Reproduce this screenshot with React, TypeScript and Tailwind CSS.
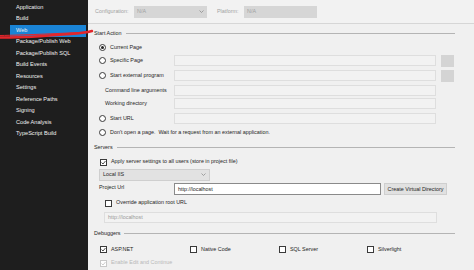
import React from "react";

const NAV = [
  "Application",
  "Build",
  "Web",
  "Package/Publish Web",
  "Package/Publish SQL",
  "Build Events",
  "Resources",
  "Settings",
  "Reference Paths",
  "Signing",
  "Code Analysis",
  "TypeScript Build",
];

function Radio({ on }: { on?: boolean }) {
  return (
    <span className="flex h-[7px] w-[7px] shrink-0 items-center justify-center rounded-full border border-[#3a3a3a] bg-white">
      {on && <span className="h-[3px] w-[3px] rounded-full bg-[#222]" />}
    </span>
  );
}

function Check({ on, dim }: { on?: boolean; dim?: boolean }) {
  return (
    <span
      className={`flex h-[7px] w-[7px] shrink-0 items-center justify-center border bg-white ${
        dim ? "border-[#c8c8c8]" : "border-[#3a3a3a]"
      }`}
    >
      {on && (
        <svg width="5" height="5" viewBox="0 0 10 10">
          <path
            d="M1 5 L4 8 L9 2"
            fill="none"
            stroke={dim ? "#c0c0c0" : "#222"}
            strokeWidth="1.6"
          />
        </svg>
      )}
    </span>
  );
}

function Field({ w, white, text }: { w: string; white?: boolean; text?: string }) {
  return (
    <div
      className={`flex h-[11px] items-center px-[3px] ${w} ${
        white ? "border border-[#8a8a8a] bg-white text-[#1e1e1e]" : "border border-[#dedede] bg-[#f2f2f2] text-[#9a9a9a]"
      }`}
    >
      {text}
    </div>
  );
}

function Header({ title }: { title: string }) {
  return (
    <div className="mr-[19px] flex items-center gap-[4px] pl-[6px]">
      <span className="text-[#1e1e1e]">{title}</span>
      <div className="h-px flex-1 bg-[#b4b4b4]" />
    </div>
  );
}

function Chevron() {
  return (
    <svg width="5" height="3" viewBox="0 0 10 6">
      <path d="M1 1 L5 5 L9 1" fill="none" stroke="#888" strokeWidth="1.5" />
    </svg>
  );
}

export default function App() {
  return (
    <div
      className="relative flex h-[270px] w-[474px] overflow-hidden text-[5.4px] leading-none"
      style={{ fontFamily: '"Liberation Sans", Arial, sans-serif' }}
    >
      <aside className="flex w-[88px] shrink-0 flex-col bg-[#1e1e1e] pt-[2px] text-[5.6px] text-[#f1f1f1]">
        {NAV.map((n) => (
          <div
            key={n}
            className={`ml-[10px] mr-[2px] flex h-[11.5px] items-center pl-[6px] ${
              n === "Web" ? "bg-[#1a84d6]" : ""
            }`}
          >
            {n}
          </div>
        ))}
      </aside>

      <main className="flex flex-1 flex-col bg-[#f0f0f0]">
        <div className="flex h-[24px] shrink-0 items-center border-b border-[#d6d6d6] bg-[#f2f2f2] pl-[7px] text-[#a2a2a2]">
          <span className="w-[39px]">Configuration:</span>
          <div className="flex h-[12px] w-[73px] items-center justify-between bg-[#d6d6d6] px-[3px]">
            <span>N/A</span>
            <Chevron />
          </div>
          <span className="ml-[10px] w-[27px]">Platform:</span>
          <div className="flex h-[12px] w-[73px] items-center bg-[#d6d6d6] px-[3px]">
            <span>N/A</span>
          </div>
        </div>

        <div className="flex h-[19px] items-center">
          <div className="flex-1">
            <Header title="Start Action" />
          </div>
        </div>

        <div className="flex h-[11px] items-center gap-[4px] pl-[11px] text-[#1e1e1e]">
          <Radio on />
          <span>Current Page</span>
        </div>

        <div className="flex h-[15px] items-center pl-[11px] text-[#1e1e1e]">
          <div className="flex w-[75px] items-center gap-[4px]">
            <Radio />
            <span>Specific Page</span>
          </div>
          <Field w="w-[262px]" />
          <div className="ml-[5px] h-[12px] w-[13px] bg-[#d4d4d4]" />
        </div>

        <div className="flex h-[16px] items-center pl-[11px] text-[#1e1e1e]">
          <div className="flex w-[75px] items-center gap-[4px]">
            <Radio />
            <span>Start external program</span>
          </div>
          <Field w="w-[262px]" />
          <div className="ml-[5px] h-[12px] w-[13px] bg-[#d4d4d4]" />
        </div>

        <div className="flex h-[14px] items-center pl-[17px] text-[#1e1e1e]">
          <span className="w-[69px]">Command line arguments</span>
          <Field w="w-[262px]" />
        </div>

        <div className="flex h-[13px] items-center pl-[17px] text-[#1e1e1e]">
          <span className="w-[69px]">Working directory</span>
          <Field w="w-[262px]" />
        </div>

        <div className="flex h-[17px] items-center pl-[11px] text-[#1e1e1e]">
          <div className="flex w-[75px] items-center gap-[4px]">
            <Radio />
            <span>Start URL</span>
          </div>
          <Field w="w-[262px]" />
        </div>

        <div className="flex h-[12px] items-center gap-[4px] pl-[11px] text-[#1e1e1e]">
          <Radio />
          <span>Don&apos;t open a page.&nbsp; Wait for a request from an external application.</span>
        </div>

        <div className="flex h-[19px] items-center">
          <div className="flex-1">
            <Header title="Servers" />
          </div>
        </div>

        <div className="flex h-[11px] items-center gap-[4px] pl-[12px] text-[#1e1e1e]">
          <Check on />
          <span>Apply server settings to all users (store in project file)</span>
        </div>

        <div className="flex h-[15px] items-center pl-[11px] text-[#1e1e1e]">
          <div className="flex h-[12px] w-[111px] items-center justify-between border border-[#cfcfcf] bg-[#e2e2e2] px-[3px]">
            <span>Local IIS</span>
            <Chevron />
          </div>
        </div>

        <div className="flex h-[15px] items-center pl-[11px] text-[#1e1e1e]">
          <span className="w-[75px] self-start pt-[3px]">Project Url</span>
          <div className="flex h-[12px] w-[207px] items-center border border-[#8a8a8a] bg-white px-[3px]">
            http://localhost
          </div>
          <div className="ml-[3px] flex h-[12px] w-[63px] items-center justify-center border border-[#cfcfcf] bg-[#e1e1e1]">
            Create Virtual Directory
          </div>
        </div>

        <div className="flex h-[13px] items-center gap-[4px] pl-[17px] text-[#1e1e1e]">
          <Check />
          <span>Override application root URL</span>
        </div>

        <div className="flex h-[16px] items-center pl-[16px]">
          <Field w="w-[333px]" text="http://localhost" />
        </div>

        <div className="flex h-[18px] items-center">
          <div className="flex-1">
            <Header title="Debuggers" />
          </div>
        </div>

        <div className="flex h-[14px] items-center pl-[12px] text-[#1e1e1e]">
          <div className="flex w-[90px] items-center gap-[4px]">
            <Check on />
            <span>ASP.NET</span>
          </div>
          <div className="flex w-[89px] items-center gap-[4px]">
            <Check />
            <span>Native Code</span>
          </div>
          <div className="flex w-[88px] items-center gap-[4px]">
            <Check />
            <span>SQL Server</span>
          </div>
          <div className="flex items-center gap-[4px]">
            <Check />
            <span>Silverlight</span>
          </div>
        </div>

        <div className="flex h-[14px] items-center gap-[4px] pl-[12px] text-[#b8b8b8]">
          <Check on dim />
          <span>Enable Edit and Continue</span>
        </div>
      </main>

      <svg
        className="pointer-events-none absolute left-0 top-[26px]"
        width="96"
        height="16"
        viewBox="0 0 96 16"
      >
        <path
          d="M0 11.5 C 20 12, 45 10, 70 8 C 78 7.5, 85 7, 92 5"
          fill="none"
          stroke="#e3262b"
          strokeWidth="2.4"
          strokeLinecap="round"
        />
        <path
          d="M0 9.5 C 25 9, 50 8, 88 6"
          fill="none"
          stroke="#e3262b"
          strokeWidth="1"
          strokeLinecap="round"
        />
      </svg>
    </div>
  );
}
